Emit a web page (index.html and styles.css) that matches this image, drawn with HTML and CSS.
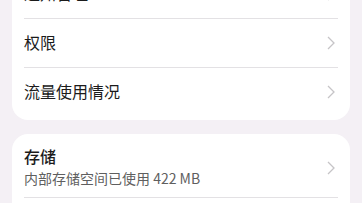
FILE: index.html
```html
<!DOCTYPE html>
<html lang="zh">
  <head>
    <meta charset="UTF-8" />
    <title>应用信息</title>
    <link rel="stylesheet" href="styles.css">
  </head>
  <body>
    <div class="page">
      <div class="card">
        <div class="row">
          <div class="row-text"><div class="title">通知管理</div></div>
          <svg class="chevron" viewBox="0 0 8 14"><path d="M1 1l6 6-6 6" /></svg>
        </div>
        <div class="row">
          <div class="row-text"><div class="title">权限</div></div>
          <svg class="chevron" viewBox="0 0 8 14"><path d="M1 1l6 6-6 6" /></svg>
        </div>
        <div class="row last">
          <div class="row-text"><div class="title">流量使用情况</div></div>
          <svg class="chevron" viewBox="0 0 8 14"><path d="M1 1l6 6-6 6" /></svg>
        </div>
      </div>

      <div class="card">
        <div class="row tall">
          <div class="row-text">
            <div class="title strong">存储</div>
            <div class="sub">内部存储空间已使用 422 MB</div>
          </div>
          <svg class="chevron" viewBox="0 0 8 14"><path d="M1 1l6 6-6 6" /></svg>
        </div>
        <div class="row"></div>
      </div>
    </div>
  </body>
</html>
```

FILE: styles.css
```css
body {
  margin: 0;
  background: #f4f0f5;
  font-family: "Noto Sans CJK SC", "Noto Sans", sans-serif;
  color: #1b1b1b;
  overflow: hidden;
}
.page {
  margin-top: -30px;
  padding: 0 12px;
}
.card {
  background: #ffffff;
  border-radius: 16px;
  padding: 0 12px;
  margin-bottom: 14px;
}
.row {
  display: flex;
  align-items: center;
  height: 48px;
  border-bottom: 1px solid #e3e1e4;
}
.row.last {
  border-bottom: none;
  height: 48px;
  padding-bottom: 4px;
}
.row.tall {
  height: 58px;
  padding-top: 5px;
}
.row-text {
  flex: 1;
  padding-bottom: 3px;
}
.title {
  font-size: 16px;
  line-height: 22px;
}
.title.strong {
  font-weight: 500;
}
.sub {
  font-size: 14px;
  line-height: 20px;
  color: #5f5f5f;
  margin-top: 1px;
}
.chevron {
  width: 8px;
  height: 14px;
  margin-right: 3px;
  fill: none;
  stroke: #c6c4c7;
  stroke-width: 1.3;
}
```
